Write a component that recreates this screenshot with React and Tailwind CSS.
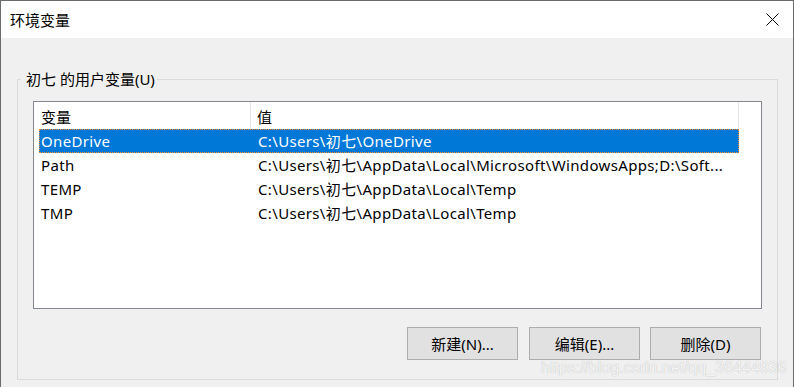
import React from "react";

const rows = [
  { name: "OneDrive", value: "C:\\Users\\初七\\OneDrive", selected: true },
  { name: "Path", value: "C:\\Users\\初七\\AppData\\Local\\Microsoft\\WindowsApps;D:\\Soft..." },
  { name: "TEMP", value: "C:\\Users\\初七\\AppData\\Local\\Temp" },
  { name: "TMP", value: "C:\\Users\\初七\\AppData\\Local\\Temp" },
];

function Btn({ children }) {
  return (
    <div className="w-[111px] h-[33px] bg-[#e1e1e1] border border-[#adadad] flex items-center justify-center text-[15px] leading-[20px] text-black">
      {children}
    </div>
  );
}

export default function App() {
  return (
    <div
      className="relative w-[794px] h-[387px] overflow-hidden border-l border-t border-r border-[#6b6b6b] bg-[#f0f0f0] text-black"
      style={{ fontFamily: '"Noto Sans", "Noto Sans CJK SC", sans-serif' }}
    >
      {/* Title bar */}
      <div className="h-[37px] bg-white flex items-center justify-between pl-[9px] pr-[14px]">
        <span className="text-[15px] leading-[20px]">环境变量</span>
        <svg width="13" height="13" viewBox="0 0 13 13" className="block">
          <path d="M0.5 0.5 L12.5 12.5 M12.5 0.5 L0.5 12.5" stroke="#000" strokeWidth="1" fill="none" />
        </svg>
      </div>

      {/* Group box */}
      <div className="relative ml-[16px] mt-[41px] w-[761px] h-[301px] border border-[#dcdcdc] pt-[21px] px-[15px]">
        <span className="absolute left-[3px] top-[-11px] pl-[5px] pr-[2px] bg-[#f0f0f0] text-[15px] leading-[20px]">
          初七 的用户变量(U)
        </span>

        {/* List view */}
        <div className="w-[729px] h-[208px] border border-[#828790] bg-white">
          <div className="h-[27px] flex text-[15px] leading-[20px]">
            <div className="w-[217px] pl-[7px] pt-[5px] border-r border-[#e5e5e5]">变量</div>
            <div className="w-[488px] pl-[6px] pt-[5px] border-r border-[#e5e5e5]">值</div>
          </div>
          <div className="ml-[5px] w-[700px] flex flex-col">
            {rows.map((r) => (
              <div
                key={r.name}
                className={
                  r.selected
                    ? "h-[24px] flex items-center text-[15px] leading-[20px] tracking-[0.35px] bg-[#0078d7] text-white border border-dotted border-[#ff8728]"
                    : "h-[24px] flex items-center text-[15px] leading-[20px] tracking-[0.35px] border border-transparent"
                }
              >
                <div className="w-[218px] pl-[1px] whitespace-nowrap">{r.name}</div>
                <div className="whitespace-nowrap">{r.value}</div>
              </div>
            ))}
          </div>
        </div>

        {/* Buttons */}
        <div className="mt-[18px] mr-[1px] flex justify-end">
          <Btn>新建(N)...</Btn>
          <div className="w-[11px]" />
          <Btn>编辑(E)...</Btn>
          <div className="w-[10px]" />
          <Btn>删除(D)</Btn>
        </div>
      </div>

      {/* Watermark */}
      <div
        className="absolute left-[540px] top-[357px] text-[16px] leading-[20px] text-[#f4f4f4] [text-shadow:0_0_1px_#b0b0b0]"
        style={{ fontFamily: '"Liberation Sans", sans-serif' }}
      >
        https://blog.csdn.net/qq_36444936
      </div>
    </div>
  );
}
